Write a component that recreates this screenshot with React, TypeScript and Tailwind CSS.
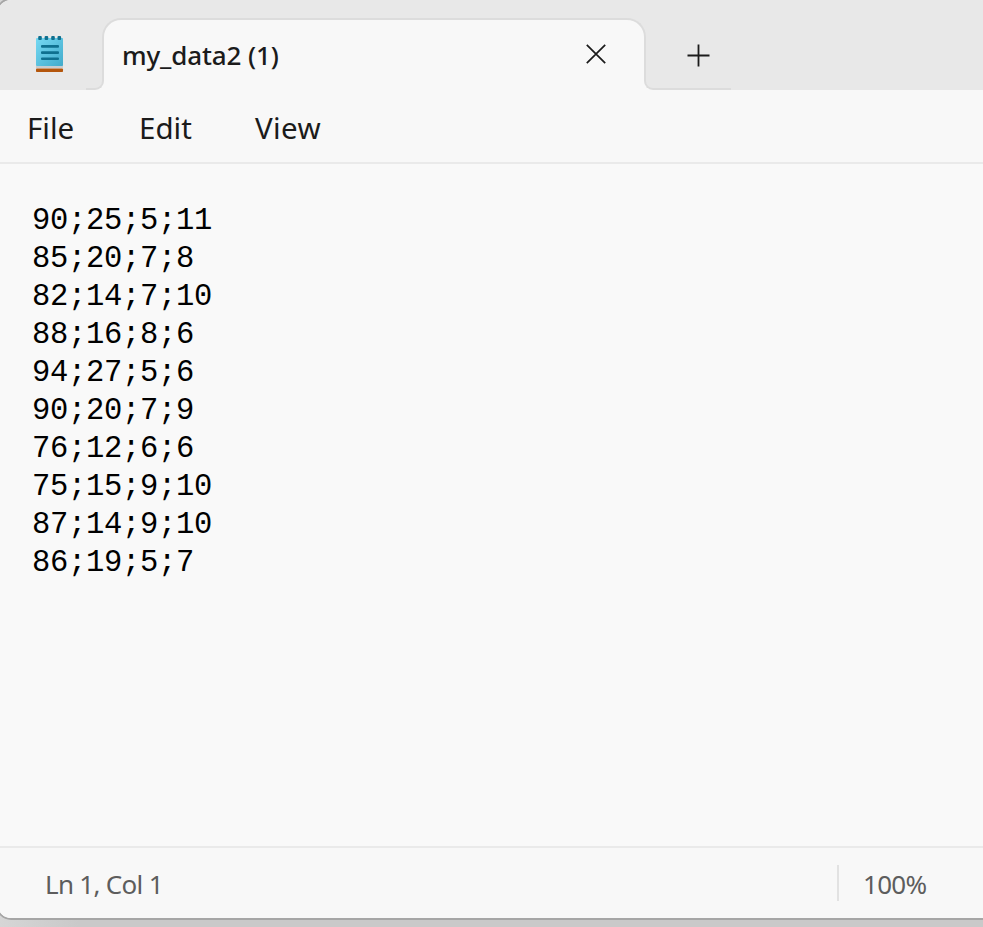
import React from 'react';

const rows = [
  '90;25;5;11',
  '85;20;7;8',
  '82;14;7;10',
  '88;16;8;6',
  '94;27;5;6',
  '90;20;7;9',
  '76;12;6;6',
  '75;15;9;10',
  '87;14;9;10',
  '86;19;5;7',
];

const NotepadIcon: React.FC = () => (
  <svg width="28" height="38" viewBox="0 0 28 38" className="shrink-0">
    <defs>
      <linearGradient id="page" x1="0" y1="0" x2="1" y2="1">
        <stop offset="0" stopColor="#76d9f3" />
        <stop offset="1" stopColor="#42abcb" />
      </linearGradient>
    </defs>
    <rect x="0" y="30" width="27" height="5" fill="#e8e8e8" />
    <rect x="0" y="31" width="27" height="2" fill="#c8cdd0" />
    <rect x="0" y="33.6" width="27" height="3.4" rx="0.8" fill="#b4560c" />
    <rect x="0" y="3" width="27" height="28" rx="0.8" fill="url(#page)" />
    <g fill="#0f708f">
      <rect x="2.2" y="1" width="3.6" height="4" rx="1" />
      <rect x="8.6" y="1" width="3.6" height="4" rx="1" />
      <rect x="15.2" y="1" width="3.6" height="4" rx="1" />
      <rect x="21.5" y="1" width="3.6" height="4" rx="1" />
      <rect x="5" y="10.1" width="18" height="2.6" rx="1" />
      <rect x="5" y="16.3" width="18" height="2.6" rx="1" />
      <rect x="5" y="22.5" width="18" height="2.6" rx="1" />
    </g>
  </svg>
);

const TitleBar: React.FC = () => (
  <header className="flex h-[90px] shrink-0 bg-[#e8e8e8]">
    <div className="w-[102px] shrink-0 pl-[36px] pt-[35px]">
      <NotepadIcon />
    </div>

    {/* Active tab */}
    <div className="relative mt-[18px] flex h-[72px] w-[544px] shrink-0 rounded-t-[19px] border-x-2 border-t-2 border-[#dcdcdc] bg-[#f8f8f8] pl-[18px] pr-[38px]">
      <span className="mt-[17px] flex-1 whitespace-nowrap font-['Noto_Sans'] text-[26px] font-medium leading-[36px] tracking-[-0.12px] text-[#1b1b1b]">
        my_data2 (1)
      </span>
      <svg width="20" height="20" viewBox="0 0 20 20" className="mt-[24px]" stroke="#1b1b1b" strokeWidth="1.7">
        <path d="M0.8 0.8 19.2 19.2M19.2 0.8 0.8 19.2" fill="none" />
      </svg>
      {/* Curved feet of the tab */}
      <div className="absolute bottom-0 -left-[18px] h-[14px] w-[18px] bg-[#f8f8f8]">
        <div className="h-full rounded-br-[9px] border-b-2 border-r-2 border-[#dcdcdc] bg-[#e8e8e8]" />
      </div>
      <div className="absolute bottom-0 -right-[87px] h-[14px] w-[87px] bg-[#f8f8f8]">
        <div className="h-full rounded-bl-[9px] border-b-2 border-l-2 border-[#dcdcdc] bg-[#e8e8e8]" />
      </div>
    </div>

    <div className="pl-[41px] pt-[44px]">
      <svg width="23" height="23" viewBox="0 0 23 23" stroke="#1b1b1b" strokeWidth="1.8">
        <path d="M11.5 0.5V22.5M0.5 11.5H22.5" fill="none" />
      </svg>
    </div>
  </header>
);

const MenuBar: React.FC = () => (
  <nav className="flex h-[74px] shrink-0 border-b-2 border-[#eaeaea] bg-[#f8f8f8] pl-[27px] pt-[20px] font-['Noto_Sans'] text-[29.5px] leading-[36px] text-[#1b1b1b]">
    <span className="w-[112px]">File</span>
    <span className="w-[116px]">Edit</span>
    <span className="tracking-[0.4px]">View</span>
  </nav>
);

const StatusBar: React.FC = () => (
  <footer className="flex h-[72px] shrink-0 border-t-2 border-[#eaeaea] bg-[#f8f8f8] pl-[45px] font-['Noto_Sans'] text-[26px] leading-[36px] text-[#5d5d5d]">
    <span className="mt-[18px] w-[792px] tracking-[-0.7px]">Ln 1, Col 1</span>
    <div className="mt-[17px] h-[36px] w-[2px] bg-[#e2e2e2]" />
    <span className="mt-[18px] pl-[24px] tracking-[-0.7px]">100%</span>
  </footer>
);

const App: React.FC = () => {
  return (
    <div className="h-[927px] w-[983px] overflow-hidden bg-linear-to-r from-[#d6d6d6] to-[#c9c9c9] to-8%">
      <div className="-ml-[4px] -mt-[2px] flex h-[922px] w-[1000px] flex-col overflow-hidden rounded-[15px] border-2 border-[#a6a6a6] bg-[#f9f9f9]">
        <div className="-mr-[4px] flex flex-1 flex-col pl-[2px]">
          <TitleBar />
          <MenuBar />
          <pre className="flex-1 bg-[#f9f9f9] pl-[32px] pt-[38px] font-['Liberation_Mono'] text-[30.5px] leading-[38px] tracking-[-0.3px] text-black">
            {rows.join('\n')}
          </pre>
          <StatusBar />
        </div>
      </div>
    </div>
  );
};

export default App;
